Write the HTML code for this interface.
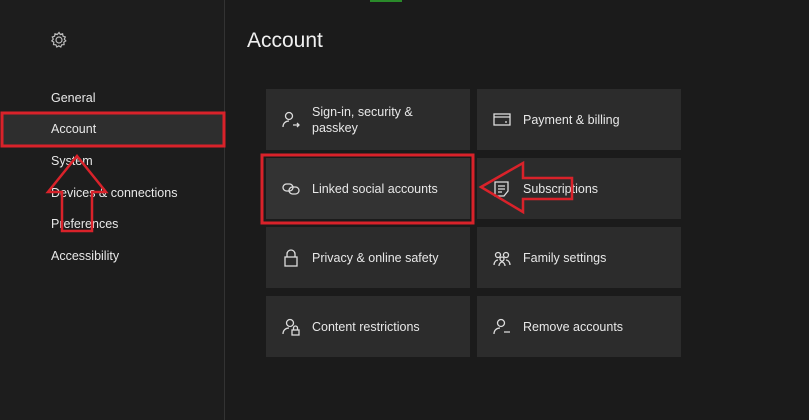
<!DOCTYPE html><html><head><style>
body{margin:0;width:809px;height:420px;background:#1b1b1b;font-family:"Liberation Sans",sans-serif;color:#e8e8e8;position:relative;overflow:hidden}
.side{position:absolute;left:0;top:0;width:224px;height:420px;background:#1d1d1d;border-right:1px solid #333}
.nav{position:absolute;left:51px;font-size:12.5px}
.t{position:absolute;background:#2c2c2c;width:204px;height:61px;font-size:12.5px}
.t span{position:absolute;left:46px;top:50%;transform:translateY(-50%);line-height:16px}
.t svg{position:absolute;left:16px;top:22px}
</style></head><body>
<div style="position:absolute;left:370px;top:0;width:32px;height:2px;background:#2a8a2a"></div>
<div class="side"></div>
<svg style="position:absolute;left:50px;top:31px" width="18" height="18" viewBox="0 0 18 18" fill="none" stroke="#bbb" stroke-width="1.2"><circle cx="9" cy="9" r="3"/><path d="M9 1.5l1.3 2 2.3-.7.4 2.4 2.3.8-1 2.1 1.5 1.8-2 1.3.3 2.4-2.4.2-.9 2.2-2-1.2-2 1.2-.9-2.2-2.4-.2.3-2.4-2-1.3 1.5-1.8-1-2.1 2.3-.8.4-2.4 2.3.7z"/></svg>
<div style="position:absolute;left:2px;top:113px;width:221px;height:32px;background:#2e2e2e"></div>
<div class="nav" style="top:91px">General</div>
<div class="nav" style="top:122px">Account</div>
<div class="nav" style="top:154px">System</div>
<div class="nav" style="top:186px">Devices &amp; connections</div>
<div class="nav" style="top:217px">Preferences</div>
<div class="nav" style="top:249px">Accessibility</div>
<div style="position:absolute;left:247px;top:29px;font-size:21px;color:#f0f0f0">Account</div>
<div class="t" style="left:266px;top:89px"><svg width="18" height="18" fill="none" stroke="#ddd" stroke-width="1.3"><circle cx="7" cy="5" r="3.5"/><path d="M1 16c0-4 3-6 6-6M11 14h6M15 12l2 2-2 2"/></svg><span>Sign-in, security &amp;<br>passkey</span></div>
<div class="t" style="left:477px;top:89px"><svg width="18" height="18" fill="none" stroke="#ddd" stroke-width="1.3"><rect x="1" y="3" width="16" height="11"/><path d="M1 6h16M12 11h2"/></svg><span>Payment &amp; billing</span></div>
<div class="t" style="left:266px;top:158px;background:#333"><svg width="18" height="18" fill="none" stroke="#ddd" stroke-width="1.3"><rect x="1" y="4" width="10" height="7" rx="3.5"/><rect x="7" y="7" width="10" height="7" rx="3.5"/></svg><span>Linked social accounts</span></div>
<div class="t" style="left:477px;top:158px"><svg width="18" height="18" fill="none" stroke="#ddd" stroke-width="1.3"><path d="M2 2h13v9l-4 5H2z M5 6h7M5 9h7M5 12h4"/></svg><span>Subscriptions</span></div>
<div class="t" style="left:266px;top:227px"><svg width="18" height="18" fill="none" stroke="#ddd" stroke-width="1.3"><rect x="3" y="8" width="12" height="9"/><path d="M5 8V5a4 4 0 0 1 8 0v3"/></svg><span>Privacy &amp; online safety</span></div>
<div class="t" style="left:477px;top:227px"><svg width="18" height="18" fill="none" stroke="#ddd" stroke-width="1.3"><circle cx="5" cy="6" r="2.5"/><circle cx="13" cy="6" r="2.5"/><circle cx="9" cy="10" r="2"/><path d="M1 16c0-3 2-5 4-5M17 16c0-3-2-5-4-5M6 17c0-2 1.5-4 3-4s3 2 3 4"/></svg><span>Family settings</span></div>
<div class="t" style="left:266px;top:296px"><svg width="18" height="18" fill="none" stroke="#ddd" stroke-width="1.3"><circle cx="8" cy="5" r="3.5"/><path d="M1 16c0-4 3-6 6-6"/><rect x="10" y="12" width="7" height="5"/><path d="M11.5 12v-2a2 2 0 0 1 4 0v2"/></svg><span>Content restrictions</span></div>
<div class="t" style="left:477px;top:296px"><svg width="18" height="18" fill="none" stroke="#ddd" stroke-width="1.3"><circle cx="8" cy="5" r="3.5"/><path d="M1 16c0-4 3-6 6-6M11 14h6"/></svg><span>Remove accounts</span></div>
<svg style="position:absolute;left:0;top:0" width="809" height="420" fill="none" stroke="#d9222a" stroke-width="3">
<rect x="2" y="113" width="222" height="33"/>
<rect x="262" y="155" width="211" height="68"/>
<polygon points="77,156 106,192 92,192 92,231 62,231 62,192 48,192" stroke-width="2.5"/>
<polygon points="481,187 523,163 523,178 572,178 572,199 523,199 523,212" stroke-width="2.5"/>
</svg>
</body></html>
